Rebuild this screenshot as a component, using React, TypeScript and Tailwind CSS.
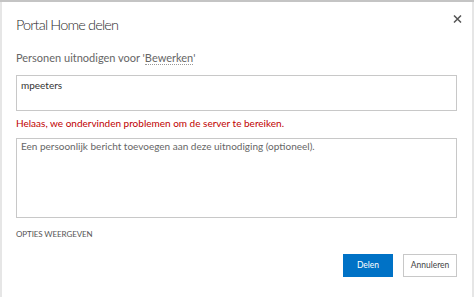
export default function App() {
  return (
    <div className="w-[474px] h-[297px] bg-[#e6e6e6] border-t-2 border-[#c4c4c4] pl-[2px] overflow-hidden" style={{ fontFamily: 'Lato, "Open Sans", sans-serif' }}>
      <div className="w-[470px] h-[295px] bg-white pl-[14px] pr-[15px]">
        {/* Header */}
        <div className="flex items-start justify-between pt-[13px]">
          <h1 className="text-[14.5px] font-light text-[#2b2b2b] leading-[20px] tracking-[-0.85px]">Portal Home delen</h1>
          <button className="mt-[0px] mr-[-5px]">
            <svg width="9" height="8" viewBox="0 0 9 8">
              <path d="M1 0.5L8 7.5M8 0.5L1 7.5" stroke="#555" strokeWidth="1.5" />
            </svg>
          </button>
        </div>

        <div className="mt-[16px] text-[11px] text-[#666] leading-[14px]">
          Personen uitnodigen voor '<span className="border-b border-dotted border-[#999]">Bewerken</span>'
        </div>

        <div className="mt-[10px] h-[36px] border border-[#c8c8c8] px-[4px] pt-[2px] text-[10px] text-[#333] leading-[14px]">
          mpeeters
        </div>

        <div className="mt-[5px] text-[10px] text-[#c00000] leading-[14px]">
          Helaas, we ondervinden problemen om de server te bereiken.
        </div>

        <div className="mt-[8px] h-[80px] border border-[#c8c8c8] px-[4px] text-[10px] text-[#666] leading-[14px]">
          Een persoonlijk bericht toevoegen aan deze uitnodiging (optioneel).
        </div>

        <div className="mt-[10px] text-[8px] text-[#555] leading-[12px] tracking-[-0.1px]">OPTIES WEERGEVEN</div>

        <div className="mt-[14px] flex justify-end gap-[10px]">
          <button className="w-[50px] h-[23px] bg-[#0072c6] text-white text-[8.5px]">Delen</button>
          <button className="w-[54px] h-[23px] border border-[#c8c8c8] bg-white text-[#444] text-[8.5px]">Annuleren</button>
        </div>
      </div>
    </div>
  );
}
